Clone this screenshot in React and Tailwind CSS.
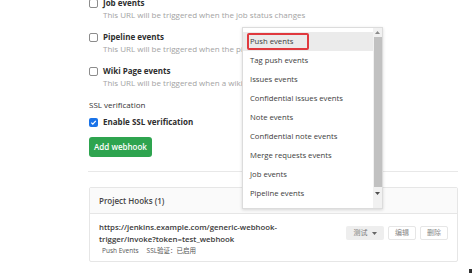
import React from 'react';

const font = { fontFamily: '"Open Sans", "Noto Sans CJK SC", sans-serif' };

const EventOption = ({ label, desc }) => (
  <div className="mb-[10px]">
    <div className="flex items-center h-[12px]">
      <span className="w-[9px] h-[9px] border border-[#8c8c8c] rounded-[2px] bg-white mr-[5px]" />
      <span className="text-[8px] leading-[12px] font-bold text-[#2e2e2e]">{label}</span>
    </div>
    <div className="pl-[14px] text-[8px] leading-[12px] text-[#a3a3a3]">{desc}</div>
  </div>
);

const events = [
  'Push events',
  'Tag push events',
  'Issues events',
  'Confidential issues events',
  'Note events',
  'Confidential note events',
  'Merge requests events',
  'Job events',
  'Pipeline events',
  'Wiki Page events',
];

export default function App() {
  return (
    <div className="relative w-[474px] h-[274px] overflow-hidden bg-white" style={font}>
      <div className="pl-[89px] w-[458px] mt-[-3px]">
        <EventOption label="Job events" desc="This URL will be triggered when the job status changes" />
        <EventOption label="Pipeline events" desc="This URL will be triggered when the pipeline status changes" />
        <EventOption label="Wiki Page events" desc="This URL will be triggered when a wiki page is created/updated" />

        <div className="text-[8px] leading-[12px] text-[#333]">SSL verification</div>
        <div className="flex items-center h-[12px] mt-[5px]">
          <span className="w-[9px] h-[9px] rounded-[2px] bg-[#1a73e8] mr-[5px] flex items-center justify-center">
            <svg width="7" height="7" viewBox="0 0 8 8">
              <path d="M1.5 4.2 L3.2 5.9 L6.6 2.2" stroke="white" strokeWidth="1.4" fill="none" />
            </svg>
          </span>
          <span className="text-[8px] leading-[12px] font-bold text-[#2e2e2e]">Enable SSL verification</span>
        </div>

        <button className="mt-[9px] h-[20px] w-[63px] rounded-[3px] bg-[#2ea44f] text-white text-[8px] font-semibold flex items-center justify-center">
          Add webhook
        </button>

        <div className="mt-[14px] -ml-[1px] h-px bg-[#e8e8e8]" />

        <div className="mt-[15px] w-[369px] border border-[#e6e6e6] rounded-[2px]">
          <div className="h-[26px] bg-[#fafafa] border-b border-[#e6e6e6] flex items-center pl-[9px] text-[8px] font-semibold text-[#444]">
            Project Hooks (1)
          </div>
          <div className="flex items-start pl-[9px] pr-[9px] pt-[7px] pb-[4px]">
            <div className="flex-1">
              <div className="text-[7.8px] leading-[12px] font-semibold text-[#3a3a3a]">
                https://jenkins.example.com/generic-webhook-
                <br />
                trigger/invoke?token=test_webhook
              </div>
              <div className="pl-[3px] text-[6.5px] leading-[12px] text-[#555] flex gap-[8px]">
                <span>Push Events</span>
                <span>SSL验证：已启用</span>
              </div>
            </div>
            <div className="flex items-center gap-[4px] mt-[5px]">
              <div className="h-[14px] w-[38px] bg-[#eeeeee] rounded-[2px] flex items-center justify-center gap-[4px] text-[7px] text-[#777]">
                测试
                <svg width="5" height="3" viewBox="0 0 5 3"><path d="M0 0 L5 0 L2.5 3 Z" fill="#666" /></svg>
              </div>
              <div className="h-[14px] w-[28px] border border-[#e6e6e6] rounded-[2px] flex items-center justify-center text-[7px] text-[#888]">
                编辑
              </div>
              <div className="h-[14px] w-[28px] border border-[#e6e6e6] rounded-[2px] flex items-center justify-center text-[7px] text-[#888]">
                删除
              </div>
            </div>
          </div>
        </div>
      </div>

      {/* dropdown overlay */}
      <div className="absolute left-[242px] top-[27px] w-[141px] h-[182px] bg-white border border-[#dcdcdc] shadow-[0_1px_3px_rgba(0,0,0,0.15)] flex overflow-hidden">
        <div className="flex-1 pt-[4px]">
          {events.map((e, i) => (
            <div
              key={e}
              className={`relative h-[19px] flex items-center pl-[7px] text-[7.7px] text-[#3c3c3c] ${i === 0 ? 'bg-[#ebebeb]' : ''}`}
            >
              {e}
              {i === 0 && (
                <span className="absolute left-[4px] top-[1px] w-[62px] h-[17px] border-2 border-[#e0393e] rounded-[2px]" />
              )}
            </div>
          ))}
        </div>
        <div className="w-[9px] bg-[#f1f1f1] flex flex-col items-center">
          <div className="h-[9px] flex items-center">
            <svg width="5" height="3" viewBox="0 0 5 3"><path d="M0 3 L5 3 L2.5 0 Z" fill="#8a8a8a" /></svg>
          </div>
          <div className="w-[8px] h-[150px] bg-[#c1c1c1]" />
          <div className="h-[12px] flex items-center">
            <svg width="5" height="3" viewBox="0 0 5 3"><path d="M0 0 L5 0 L2.5 3 Z" fill="#505050" /></svg>
          </div>
        </div>
      </div>

      <div className="absolute right-[2px] bottom-[1px] w-[3px] h-[4px] bg-[#333]" />
    </div>
  );
}
